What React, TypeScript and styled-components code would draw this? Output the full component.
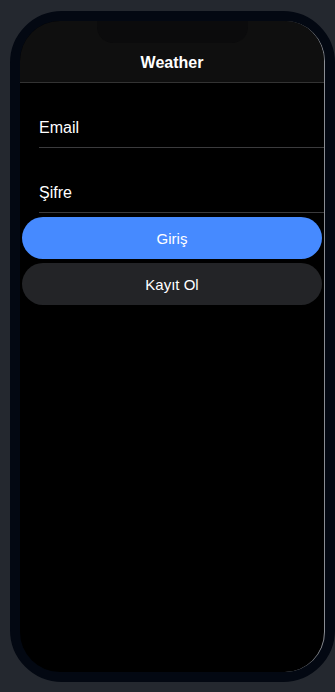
import React, { FC, useState } from 'react'
import styled, { createGlobalStyle } from 'styled-components'

const GlobalStyle = createGlobalStyle`
    html, body {
        margin: 0;
        padding: 0;
        background-color: #24282f;
        font-family: "Liberation Sans", Arial, sans-serif;
    }
`

const Page = styled.main`
    width: 335px;
    height: 692px;
    padding: 11px 0 10px 10px;
    box-sizing: border-box;
    overflow: hidden;
`
const Phone = styled.div`
    width: 325px;
    height: 671px;
    box-sizing: border-box;
    border: 10px solid #030812;
    border-radius: 52px;
    background-color: #030812;
`
const Screen = styled.div`
    position: relative;
    height: 100%;
    display: flex;
    flex-direction: column;
    background-color: #000;
    border-radius: 40px;
    border-right: 1px solid #8a8d93;
    overflow: hidden;
`
const Notch = styled.div`
    position: absolute;
    top: 0;
    left: 77px;
    width: 151px;
    height: 22px;
    background-color: #0b0b0c;
    border-radius: 0 0 16px 16px;
`
const Header = styled.header`
    height: 62px;
    flex-shrink: 0;
    display: flex;
    align-items: flex-end;
    justify-content: center;
    padding-bottom: 10px;
    box-sizing: border-box;
    background-color: #0f0f0f;
    border-bottom: 1px solid #333;
`
const Title = styled.h1`
    margin: 0;
    color: #fff;
    font-size: 16px;
    font-weight: bold;
`
const Form = styled.form`
    display: flex;
    flex-direction: column;
    padding-top: 25px;
`
const Field = styled.input`
    margin: 0 0 25px 19px;
    padding: 10px 0;
    line-height: 19px;
    font-size: 16px;
    font-family: inherit;
    color: #fff;
    background: transparent;
    border: none;
    border-bottom: 1px solid #3b3b3d;
    outline: none;

    &::placeholder {
        color: #fff;
        opacity: 1;
    }

    &:last-of-type {
        margin-bottom: 4px;
    }
`
const Button = styled.button<{ $primary?: boolean }>`
    height: 42px;
    margin: 0 2px 4px 2px;
    border: none;
    border-radius: 21px;
    font-size: 15px;
    font-family: inherit;
    color: #fff;
    background-color: ${(p) => (p.$primary ? '#468aff' : '#232427')};
    cursor: pointer;
`

const App: FC = () => {
    const [email, setEmail] = useState('')
    const [password, setPassword] = useState('')

    return (
        <>
            <GlobalStyle />
            <Page>
                <Phone>
                    <Screen>
                        <Notch />
                        <Header>
                            <Title>Weather</Title>
                        </Header>
                        <Form onSubmit={(e) => e.preventDefault()}>
                            <Field
                                type="email"
                                placeholder="Email"
                                value={email}
                                onChange={(e) => setEmail(e.target.value)}
                            />
                            <Field
                                type="password"
                                placeholder="Şifre"
                                value={password}
                                onChange={(e) => setPassword(e.target.value)}
                            />
                            <Button $primary type="submit">
                                Giriş
                            </Button>
                            <Button type="button">Kayıt Ol</Button>
                        </Form>
                    </Screen>
                </Phone>
            </Page>
        </>
    )
}

export default App
